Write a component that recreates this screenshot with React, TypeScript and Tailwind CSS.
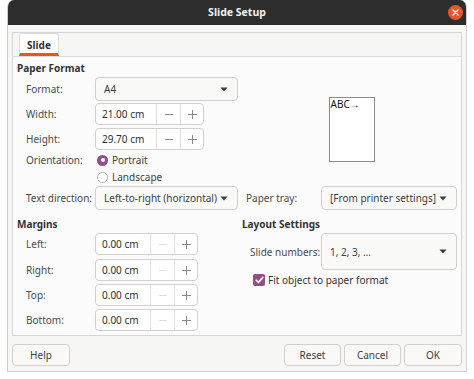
import React from "react";

function Caret() {
  return (
    <svg width="8" height="5" viewBox="0 0 8 5" className="shrink-0">
      <path d="M0.5 0.5h7L4 4.5z" fill="#3d3d3d" />
    </svg>
  );
}

function Combo({ text, className = "" }: { text: string; className?: string }) {
  return (
    <div
      className={`flex shrink-0 items-center justify-between whitespace-nowrap rounded-[4px] border border-[#d2cfcc] bg-[#f9f9f8] pl-[8px] pr-[9px] text-[#3d3d3d] ${className}`}
    >
      <span>{text}</span>
      <Caret />
    </div>
  );
}

function Spin({ value, entry, minusOff }: { value: string; entry: string; minusOff?: boolean }) {
  return (
    <div className="flex h-[22px] shrink-0 rounded-[4px] border border-[#d2cfcc] bg-white">
      <div className={`flex items-center whitespace-nowrap pl-[6px] text-[#2e2e2e] ${entry}`}>{value}</div>
      <div className="flex w-[24px] items-center justify-center border-l border-[#e2e0de]">
        <span className={`block h-px w-[8px] ${minusOff ? "bg-[#dedede]" : "bg-[#8a8a8a]"}`} />
      </div>
      <div className="relative flex w-[23px] items-center justify-center border-l border-[#e2e0de]">
        <span className="block h-px w-[9px] bg-[#8a8a8a]" />
        <span className="absolute h-[9px] w-px bg-[#8a8a8a]" />
      </div>
    </div>
  );
}

function Row({ label, children, h = "h-[22px]" }: { label: string; children: React.ReactNode; h?: string }) {
  return (
    <div className={`flex items-center ${h}`}>
      <div className="w-[78px] shrink-0 whitespace-nowrap pl-[9px] text-[#4a4a4a]">{label}</div>
      {children}
    </div>
  );
}

export default function App() {
  return (
    <div className="h-[379px] w-[474px] bg-white font-['Noto_Sans',sans-serif] text-[10px] leading-none">
      <div className="ml-[7px] flex h-[372px] w-[460px] flex-col overflow-hidden rounded-t-[7px] border border-t-0 border-[#cfcfcf] bg-[#f6f6f5]">
        {/* title bar */}
        <div className="relative flex h-[25px] shrink-0 items-center justify-center bg-[#2d2d2d]">
          <span className="text-[10.5px] font-bold text-[#f2f2f2]">Slide Setup</span>
          <div className="absolute right-[3px] top-[5px] flex h-[15px] w-[15px] items-center justify-center rounded-full bg-[#e9552a]">
            <svg width="7" height="7" viewBox="0 0 7 7">
              <path d="M1 1l5 5M6 1l-5 5" stroke="#fff" strokeWidth="1.4" strokeLinecap="round" />
            </svg>
          </div>
        </div>

        <div className="flex flex-1 flex-col px-[4px] pt-[7px]">
          {/* notebook */}
          <div className="flex h-[304px] flex-col border border-[#d6d6d6] bg-[#fbfbfb]">
            <div className="flex h-[24px] shrink-0 border-b border-[#dcdcdc] bg-[#f6f6f5] pl-[6px]">
              <div className="flex w-[40px] items-center justify-center rounded-t-[3px] border-x border-t border-[#dcdcdc] border-b-[3px] border-b-[#e95420] bg-white pt-[2px] text-[10px] font-bold text-[#333]">
                Slide
              </div>
            </div>

            <div className="flex flex-col px-[4px]">
              {/* top block */}
              <div className="flex">
                <div className="flex w-[223px] shrink-0 flex-col">
                  <div className="mt-[4px] flex h-[14px] items-center text-[10px] font-bold text-[#333]">Paper Format</div>
                  <div className="mt-[2px]">
                    <Row label="Format:" h="h-[24px]">
                      <Combo text="A4" className="h-[24px] w-[143px]" />
                    </Row>
                  </div>
                  <div className="mt-[2px]">
                    <Row label="Width:">
                      <Spin value="21.00 cm" entry="w-[60px]" />
                    </Row>
                  </div>
                  <div className="mt-[3px]">
                    <Row label="Height:">
                      <Spin value="29.70 cm" entry="w-[60px]" />
                    </Row>
                  </div>
                  <div className="mt-[2px] flex h-[16px] items-center">
                    <div className="w-[80px] shrink-0 whitespace-nowrap pl-[9px] text-[#4a4a4a]">Orientation:</div>
                    <span className="flex h-[11px] w-[11px] items-center justify-center rounded-full bg-[#924d8b]">
                      <span className="h-[4px] w-[4px] rounded-full bg-white" />
                    </span>
                    <span className="ml-[4px] text-[#3d3d3d]">Portrait</span>
                  </div>
                  <div className="mt-px flex h-[16px] items-center">
                    <div className="w-[80px] shrink-0" />
                    <span className="h-[11px] w-[11px] rounded-full border border-[#b8b5b2] bg-white" />
                    <span className="ml-[4px] text-[#3d3d3d]">Landscape</span>
                  </div>
                </div>
                <div className="flex flex-1 justify-center pl-[6px] pt-[40px]">
                  <div className="h-[65px] w-[46px] border border-[#8a8a8a] bg-white px-px text-[10px] leading-[12px] text-[#111]">
                    ABC→
                  </div>
                </div>
              </div>

              {/* text direction row */}
              <div className="mt-px flex h-[24px] items-center">
                <Row label="Text direction:" h="h-[24px]">
                  <Combo text="Left-to-right (horizontal)" className="h-[24px] w-[143px]" />
                </Row>
                <div className="ml-[8px] w-[75px] shrink-0 whitespace-nowrap text-[#4a4a4a]">Paper tray:</div>
                <Combo text="[From printer settings]" className="h-[24px] w-[136px]" />
              </div>

              {/* bottom block */}
              <div className="flex">
                <div className="flex w-[225px] shrink-0 flex-col">
                  <div className="mt-[7px] flex h-[14px] items-center text-[10px] font-bold text-[#333]">Margins</div>
                  <div className="mt-[2px]">
                    <Row label="Left:">
                      <Spin value="0.00 cm" entry="w-[54px]" minusOff />
                    </Row>
                  </div>
                  <div className="mt-[4px]">
                    <Row label="Right:">
                      <Spin value="0.00 cm" entry="w-[54px]" minusOff />
                    </Row>
                  </div>
                  <div className="mt-[3px]">
                    <Row label="Top:">
                      <Spin value="0.00 cm" entry="w-[54px]" minusOff />
                    </Row>
                  </div>
                  <div className="mt-[3px]">
                    <Row label="Bottom:">
                      <Spin value="0.00 cm" entry="w-[54px]" minusOff />
                    </Row>
                  </div>
                </div>
                <div className="flex flex-1 flex-col">
                  <div className="mt-[7px] flex h-[14px] items-center text-[10px] font-bold text-[#333]">Layout Settings</div>
                  <div className="mt-[2px] flex h-[37px] items-center">
                    <div className="w-[79px] shrink-0 whitespace-nowrap pl-[8px] text-[#4a4a4a]">Slide numbers:</div>
                    <Combo text="1, 2, 3, …" className="h-[37px] w-[136px]" />
                  </div>
                  <div className="mt-[3px] flex h-[14px] items-center pl-[11px]">
                    <span className="flex h-[12px] w-[12px] items-center justify-center rounded-[2px] bg-[#924d8b]">
                      <svg width="9" height="8" viewBox="0 0 9 8">
                        <path d="M1.2 4.2l2.2 2.2L7.8 1.4" stroke="#fff" strokeWidth="1.6" fill="none" strokeLinecap="round" strokeLinejoin="round" />
                      </svg>
                    </span>
                    <span className="ml-[3px] text-[#333]">Fit object to paper format</span>
                  </div>
                </div>
              </div>
            </div>
          </div>

          {/* buttons */}
          <div className="mt-[8px] flex h-[22px] text-[#3d3d3d]">
            <button className="h-[22px] w-[58px] rounded-[4px] border border-[#d2cfcc] bg-[#f9f9f8]">Help</button>
            <div className="flex-1" />
            <button className="h-[22px] w-[57px] rounded-[4px] border border-[#d2cfcc] bg-[#f9f9f8]">Reset</button>
            <button className="ml-[3px] h-[22px] w-[57px] rounded-[4px] border border-[#d2cfcc] bg-[#f9f9f8]">Cancel</button>
            <button className="ml-[3px] h-[22px] w-[58px] rounded-[4px] border border-[#d2cfcc] bg-[#f9f9f8]">OK</button>
          </div>
        </div>
      </div>
    </div>
  );
}
